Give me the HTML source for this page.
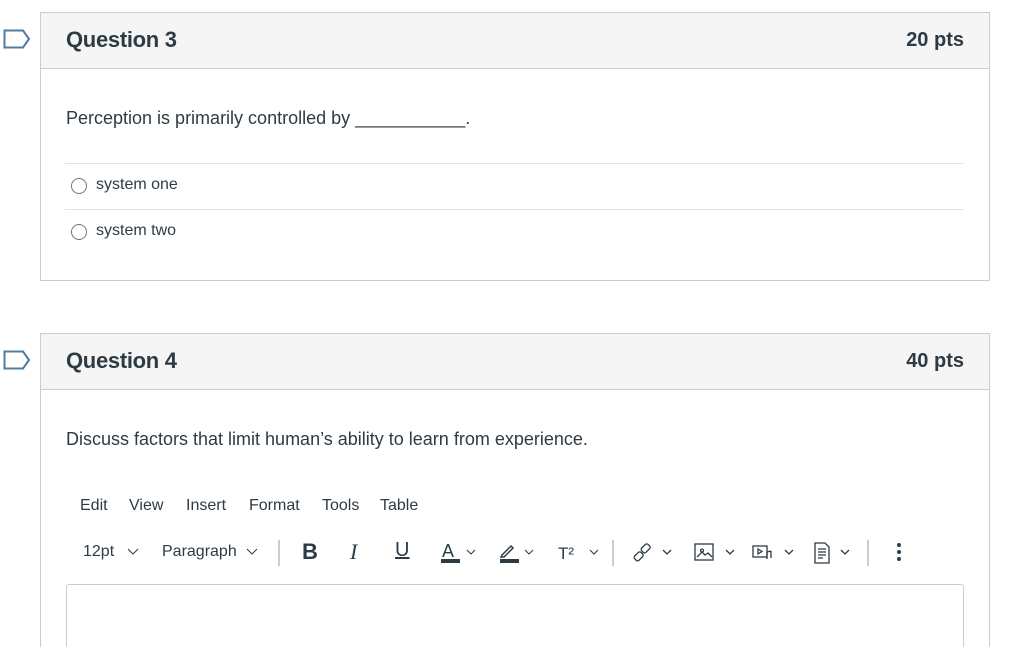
<!DOCTYPE html>
<html><head><style>
*{box-sizing:border-box;margin:0;padding:0}
html,body{width:1024px;height:647px;overflow:hidden}
body{background:#fff;font-family:"Liberation Sans",sans-serif;color:#2d3b45;position:relative}
.box{position:absolute;left:40px;width:950px;border:1px solid #c7cdd1}
.hd{height:56px;background:#f5f5f5;border-bottom:1px solid #c7cdd1;position:relative}
.hd .t{position:absolute;left:25px;top:14px;font-size:22px;font-weight:bold;letter-spacing:-0.3px}
.hd .p{position:absolute;right:25px;top:16px;font-size:20px;font-weight:bold}
.tag{position:absolute;left:3px}
.ab{position:absolute;font-size:18px}
.line{position:absolute;left:65px;width:899px;height:1px;background:#dfe3e6}
.radio{position:absolute;left:71px;width:16px;height:16px;border:1px solid #6b7780;border-radius:50%}
.opt{position:absolute;left:96px;font-size:16px}
.m{position:absolute;top:497px;font-size:16px}
.tb{position:absolute;top:543px;font-size:16px}
.chev{position:absolute;top:548px}
</style></head><body>
<svg class="tag" style="top:29px" width="28" height="20"><path d="M1.5 1.5H20L26 10L20 18.5H1.5Z" fill="none" stroke="#4f7ba1" stroke-width="2"/></svg>
<div class="box" style="top:12px;height:269px"><div class="hd"><span class="t">Question 3</span><span class="p">20 pts</span></div></div>
<div class="ab" style="left:66px;top:108px">Perception is primarily controlled by ___________.</div>
<div class="line" style="top:163px"></div>
<div class="radio" style="top:178px"></div><div class="opt" style="top:176px">system one</div>
<div class="line" style="top:209px"></div>
<div class="radio" style="top:224px"></div><div class="opt" style="top:222px">system two</div>

<svg class="tag" style="top:350px" width="28" height="20"><path d="M1.5 1.5H20L26 10L20 18.5H1.5Z" fill="none" stroke="#4f7ba1" stroke-width="2"/></svg>
<div class="box" style="top:333px;height:330px"><div class="hd"><span class="t">Question 4</span><span class="p">40 pts</span></div></div>
<div class="ab" style="left:66px;top:429px">Discuss factors that limit human’s ability to learn from experience.</div>
<div class="m" style="left:80px">Edit</div><div class="m" style="left:129px">View</div><div class="m" style="left:186px">Insert</div><div class="m" style="left:249px">Format</div><div class="m" style="left:322px">Tools</div><div class="m" style="left:380px">Table</div>
<div class="tb" style="left:83px">12pt</div>
<svg class="chev" style="left:127px" width="12" height="8"><path d="M1 1l5 5 5-5" fill="none" stroke="#2d3b45"/></svg>
<div class="tb" style="left:162px">Paragraph</div>
<svg class="chev" style="left:246px" width="12" height="8"><path d="M1 1l5 5 5-5" fill="none" stroke="#2d3b45"/></svg>
<div style="position:absolute;left:278px;top:540px;width:2px;height:26px;background:#c7cdd1"></div>
<div class="tb" style="left:302px;top:539px;font-size:22px;font-weight:bold">B</div>
<div class="tb" style="left:350px;top:539px;font-size:22px;font-style:italic;font-family:'Liberation Serif',serif">I</div>
<div class="tb" style="left:395px;top:539px;font-size:20px;text-decoration:underline">U</div>
<svg style="position:absolute;left:440px;top:540px" width="170" height="24">
<text x="2" y="17" font-size="18" fill="#2d3b45" font-family="Liberation Sans">A</text><rect x="1" y="19" width="19" height="4" fill="#2d3b45"/>
<path d="M27 10l4 4 4-4M85 10l4 4 4-4M150 10l4 4 4-4" fill="none" stroke="#2d3b45"/>
<path d="M62 15l9-9 2 2-9 9h-3z" fill="none" stroke="#2d3b45" stroke-width="1.5"/><rect x="60" y="19" width="19" height="4" fill="#2d3b45"/>
<text x="118" y="19" font-size="17" fill="#2d3b45" font-family="Liberation Sans">T²</text>
</svg>
<div style="position:absolute;left:612px;top:540px;width:2px;height:26px;background:#c7cdd1"></div>
<svg style="position:absolute;left:630px;top:540px" width="230" height="26">
<g fill="none" stroke="#2d3b45" stroke-width="1.3">
<rect x="6" y="12" width="6" height="9" rx="2" transform="rotate(45 9 16)"/><rect x="13" y="4" width="6" height="9" rx="2" transform="rotate(45 16 8)"/>
<path d="M33 10l4 4 4-4"/>
<rect x="65" y="4" width="18" height="16"/><path d="M67 17l5-5 3 3 3-2 4 4M72 9a1.5 1.5 0 1 0 .1 0"/>
<path d="M96 10l4 4 4-4"/>
<rect x="123" y="6" width="14" height="11"/><path d="M128 9v5l4-2.5z M137 12v7M141 11v7M137 12l4-1"/>
<path d="M155 10l4 4 4-4"/>
<path d="M185 3h10l4 4v16h-14z M188 9h8M188 12h8M188 15h8M188 18h5"/>
<path d="M211 10l4 4 4-4"/>
</g></svg>
<div style="position:absolute;left:867px;top:540px;width:2px;height:26px;background:#c7cdd1"></div>
<svg style="position:absolute;left:895px;top:542px" width="8" height="22"><circle cx="4" cy="3" r="2" fill="#2d3b45"/><circle cx="4" cy="10" r="2" fill="#2d3b45"/><circle cx="4" cy="17" r="2" fill="#2d3b45"/></svg>
<div style="position:absolute;left:66px;top:584px;width:898px;height:80px;border:1px solid #c7cdd1;border-radius:3px"></div>
</body></html>
